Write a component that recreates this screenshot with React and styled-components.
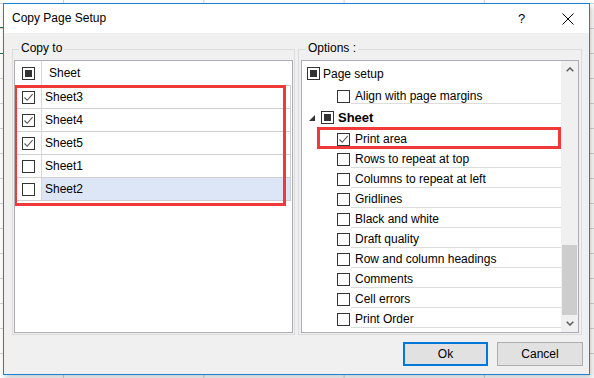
import React from 'react'
import styled, { createGlobalStyle } from 'styled-components'

const GlobalStyle = createGlobalStyle`
  html, body {
    margin: 0;
    padding: 0;
  }
  body {
    font-family: "Liberation Sans", Arial, sans-serif;
    font-size: 12px;
    color: #000;
  }
`

const sheets = [
  { name: 'Sheet3', checked: true },
  { name: 'Sheet4', checked: true },
  { name: 'Sheet5', checked: true },
  { name: 'Sheet1', checked: false },
  { name: 'Sheet2', checked: false, selected: true },
]

const sheetOptions = [
  'Print area',
  'Rows to repeat at top',
  'Columns to repeat at left',
  'Gridlines',
  'Black and white',
  'Draft quality',
  'Row and column headings',
  'Comments',
  'Cell errors',
  'Print Order',
]

function Checkbox({ state }) {
  return (
    <Box>
      {state === 'checked' && (
        <svg width="11" height="11" viewBox="0 0 11 11">
          <polyline points="1.5,5.5 4.2,8.3 9.6,2.2" fill="none" stroke="#555" strokeWidth="1.1" />
        </svg>
      )}
      {state === 'mixed' && <Mixed />}
    </Box>
  )
}

function Chevron({ down }) {
  return (
    <svg width="8" height="5" viewBox="0 0 8 5">
      <polyline
        points={down ? '0.7,0.8 4,4 7.3,0.8' : '0.7,4.2 4,1 7.3,4.2'}
        fill="none"
        stroke="#606060"
        strokeWidth="1.6"
      />
    </svg>
  )
}

function App() {
  return (
    <Desktop>
      <GlobalStyle />
      <Dialog>
        <TitleBar>
          <Title>Copy Page Setup</Title>
          <HelpGlyph>?</HelpGlyph>
          <CloseIcon width="12" height="12" viewBox="0 0 12 12">
            <line x1="0.5" y1="0.5" x2="11.5" y2="11.5" stroke="#000" strokeWidth="1" />
            <line x1="11.5" y1="0.5" x2="0.5" y2="11.5" stroke="#000" strokeWidth="1" />
          </CloseIcon>
        </TitleBar>

        <Body>
          <Groups>
            <GroupBox $w={283} $pad={1}>
              <Legend $left={6}>Copy to</Legend>
              <ListBox $w={279}>
                <SheetGrid>
                  <GridRow $header>
                    <CheckCell>
                      <Checkbox state="mixed" />
                    </CheckCell>
                    <NameCell $header>Sheet</NameCell>
                  </GridRow>
                  {sheets.map((s) => (
                    <GridRow key={s.name}>
                      <CheckCell>
                        <Checkbox state={s.checked ? 'checked' : 'none'} />
                      </CheckCell>
                      <NameCell $selected={s.selected}>{s.name}</NameCell>
                    </GridRow>
                  ))}
                </SheetGrid>
                <RedMark $x={-1} $y={24} $w={272} $h={121} />
              </ListBox>
            </GroupBox>

            <GroupBox $w={284} $pad={2}>
              <Legend $left={7}>Options :</Legend>
              <ListBox $w={278}>
                <TreePane>
                  <TreeRows>
                    <TreeRow $h={25} $indent={5} $top={0}>
                      <Checkbox state="mixed" />
                      <TreeLabel $gap={3}>Page setup</TreeLabel>
                    </TreeRow>
                    <TreeRow $h={18} $indent={35}>
                      <Checkbox state="none" />
                      <TreeLabel $line>Align with page margins</TreeLabel>
                    </TreeRow>
                    <TreeRow $h={24} $indent={7}>
                      <Expander width="6" height="6" viewBox="0 0 6 6">
                        <polygon points="0,6 6,6 6,0" fill="#333" />
                      </Expander>
                      <Checkbox state="mixed" />
                      <TreeLabel $bold $gap={4}>Sheet</TreeLabel>
                    </TreeRow>
                    {sheetOptions.map((o, i) => (
                      <TreeRow key={o} $h={20} $indent={35}>
                        <Checkbox state={i === 0 ? 'checked' : 'none'} />
                        <TreeLabel $line>{o}</TreeLabel>
                      </TreeRow>
                    ))}
                  </TreeRows>
                  <Scrollbar>
                    <ScrollArrow>
                      <Chevron />
                    </ScrollArrow>
                    <ScrollTrack>
                      <ScrollThumb />
                    </ScrollTrack>
                    <ScrollArrow>
                      <Chevron down />
                    </ScrollArrow>
                  </Scrollbar>
                </TreePane>
                <RedMark $x={15} $y={66} $w={244} $h={22} />
              </ListBox>
            </GroupBox>
          </Groups>

          <ButtonRow>
            <DialogButton $default>Ok</DialogButton>
            <DialogButton>Cancel</DialogButton>
          </ButtonRow>
        </Body>
      </Dialog>
    </Desktop>
  )
}

export default App

const Desktop = styled.div`
  width: 594px;
  height: 378px;
  box-sizing: border-box;
  padding: 3px 5px 4px 3px;
  overflow: hidden;
  background-color: #fff;
  background-image:
    linear-gradient(#217346, #217346),
    linear-gradient(#217346, #217346),
    linear-gradient(to right, #d4d4d4 1px, transparent 1px),
    linear-gradient(to bottom, #d4d4d4 1px, transparent 1px);
  background-repeat: no-repeat, no-repeat, repeat, repeat;
  background-size: 3px 1px, 3px 1px, 140.3px 100%, 100% 25px;
  background-position: 0 27px, 0 53px, 63px 0, 0 3px;
`

const Dialog = styled.div`
  width: 587px;
  height: 372px;
  box-sizing: border-box;
  border: 1px solid #1883d7;
  background: #f0f0f0;
  display: flex;
  flex-direction: column;
  box-shadow: 2px 3px 6px rgba(0, 0, 0, 0.22);
`

const TitleBar = styled.div`
  height: 29px;
  flex: none;
  background: #fff;
  display: flex;
  align-items: center;
  padding: 0 15px 0 8px;
`

const Title = styled.div`
  flex: 1;
  font-size: 12px;
  padding-bottom: 1px;
`

const HelpGlyph = styled.span`
  font-size: 13px;
  width: 10px;
  margin-right: 34px;
  padding-bottom: 1px;
`

const CloseIcon = styled.svg`
  display: block;
`

const Body = styled.div`
  flex: 1;
  display: flex;
  flex-direction: column;
  padding: 16px 6px 7px 8px;
`

const Groups = styled.div`
  display: flex;
  gap: 3px;
  height: 286px;
`

const GroupBox = styled.div`
  position: relative;
  width: ${(p) => p.$w}px;
  box-sizing: border-box;
  border: 1px solid #dcdcdc;
  padding: 10px ${(p) => p.$pad}px 1px;
`

const Legend = styled.span`
  position: absolute;
  top: -9px;
  left: ${(p) => p.$left}px;
  padding: 0 2px;
  line-height: 15px;
  background: #f0f0f0;
`

const ListBox = styled.div`
  position: relative;
  width: ${(p) => p.$w}px;
  height: 273px;
  box-sizing: border-box;
  border: 1px solid #abadb3;
  background: #fff;
  overflow: hidden;
`

const SheetGrid = styled.div`
  width: 276px;
  display: flex;
  flex-direction: column;
`

const GridRow = styled.div`
  display: flex;
  height: ${(p) => (p.$header ? 25 : 23)}px;
  box-sizing: border-box;
  border-bottom: 1px solid #cfcfcf;
  border-right: ${(p) => (p.$header ? 'none' : '1px solid #cfcfcf')};
`

const CheckCell = styled.div`
  width: 27px;
  box-sizing: border-box;
  border-right: 1px solid #d8d8d8;
  display: flex;
  align-items: center;
  padding-left: 7px;
`

const NameCell = styled.div`
  flex: 1;
  display: flex;
  align-items: center;
  padding-left: ${(p) => (p.$header ? 7 : 3)}px;
  background: ${(p) => (p.$selected ? '#dce6f7' : 'transparent')};
`

const Box = styled.span`
  width: 13px;
  height: 13px;
  flex: none;
  box-sizing: border-box;
  border: 1px solid #333;
  background: #fff;
  display: flex;
  align-items: center;
  justify-content: center;
`

const Mixed = styled.span`
  width: 7px;
  height: 7px;
  background: #333;
`

const RedMark = styled.div`
  position: absolute;
  left: ${(p) => p.$x}px;
  top: ${(p) => p.$y}px;
  width: ${(p) => p.$w}px;
  height: ${(p) => p.$h}px;
  box-sizing: border-box;
  border: 3px solid #f03a3a;
  pointer-events: none;
`

const TreePane = styled.div`
  display: flex;
  height: 100%;
`

const TreeRows = styled.div`
  flex: 1;
  display: flex;
  flex-direction: column;
`

const TreeRow = styled.div`
  height: ${(p) => p.$h}px;
  flex: none;
  box-sizing: border-box;
  display: flex;
  align-items: center;
  padding-left: ${(p) => p.$indent}px;
  padding-top: ${(p) => (p.$top === 0 ? 0 : 2)}px;
`

const Expander = styled.svg`
  flex: none;
  margin-right: 6px;
  margin-top: 1px;
`

const TreeLabel = styled.div`
  flex: 1;
  align-self: stretch;
  display: flex;
  align-items: center;
  box-sizing: border-box;
  margin-left: ${(p) => (p.$line ? 1 : p.$gap)}px;
  padding-left: ${(p) => (p.$line ? 4 : 0)}px;
  border-bottom: ${(p) => (p.$line ? '1px solid #dcdcdc' : 'none')};
  font-weight: ${(p) => (p.$bold ? 'bold' : 'normal')};
  font-size: ${(p) => (p.$bold ? 13 : 12)}px;
  white-space: nowrap;
`

const Scrollbar = styled.div`
  width: 17px;
  flex: none;
  display: flex;
  flex-direction: column;
  background: #f0f0f0;
`

const ScrollArrow = styled.div`
  height: 17px;
  flex: none;
  display: flex;
  align-items: center;
  justify-content: center;
`

const ScrollTrack = styled.div`
  flex: 1;
  display: flex;
  flex-direction: column;
  justify-content: flex-end;
  padding: 0 1px;
`

const ScrollThumb = styled.div`
  height: 70px;
  background: #cdcdcd;
`

const ButtonRow = styled.div`
  display: flex;
  justify-content: flex-end;
  gap: 9px;
  margin-top: 7px;
`

const DialogButton = styled.button`
  width: ${(p) => (p.$default ? 85 : 86)}px;
  height: 24px;
  box-sizing: border-box;
  margin: 0;
  padding: 0;
  font-family: "Liberation Sans", Arial, sans-serif;
  font-size: 12px;
  color: #000;
  background: #e1e1e1;
  border: ${(p) => (p.$default ? '2px solid #0078d7' : '1px solid #adadad')};
  border-radius: 0;
`
